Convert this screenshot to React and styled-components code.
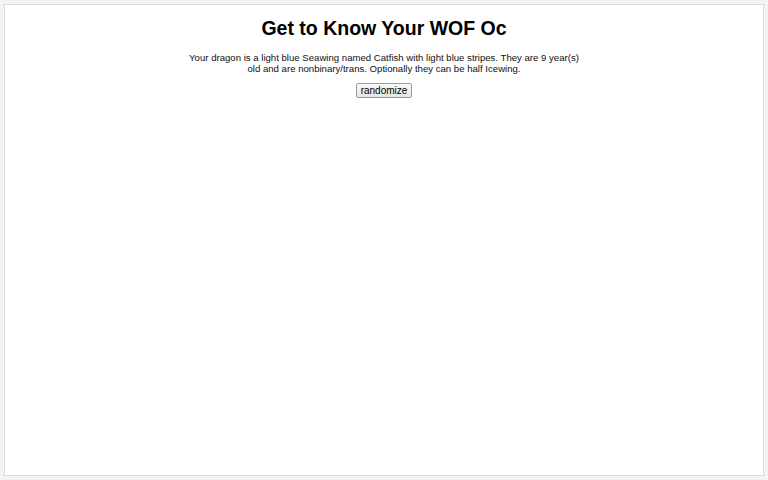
import React, { useState } from "react";
import styled, { createGlobalStyle } from "styled-components";

const GlobalStyle = createGlobalStyle`
  html, body {
    margin: 0;
    padding: 0;
    background: #f3f3f3;
  }
  body {
    font-family: "Liberation Sans", Arial, sans-serif;
    color: #000;
  }
`;

const Page = styled.div`
  box-sizing: border-box;
  height: 480px;
  padding: 4px;
`;

const Panel = styled.main`
  box-sizing: border-box;
  height: 472px;
  background: #fff;
  border: 1px solid #dcdcdc;
  display: flex;
  flex-direction: column;
  align-items: center;
`;

const Title = styled.h1`
  margin: 11px 0 0;
  font-size: 19.5px;
  line-height: 24px;
  font-weight: bold;
`;

const Blurb = styled.p`
  margin: 12px 0 0;
  max-width: 400px;
  font-size: 9.6px;
  line-height: 11.1px;
  text-align: center;
  color: #111;
`;

const RandomButton = styled.button`
  margin-top: 9px;
  font-family: "Liberation Sans", Arial, sans-serif;
  font-size: 10px;
  padding: 1px 4px;
  background: linear-gradient(#f8f8f8, #e6e6e6);
  border: 1px solid #9a9a9a;
  border-radius: 2px;
  color: #000;
`;

const describe = (d) =>
  `Your dragon is a ${d.color} ${d.tribe} named ${d.name} with ${d.stripes} stripes. ` +
  `They are ${d.age} year(s) old and are ${d.identity}. ` +
  `Optionally they can be half ${d.hybrid}.`;

export default function App() {
  const [dragon] = useState({
    color: "light blue",
    tribe: "Seawing",
    name: "Catfish",
    stripes: "light blue",
    age: 9,
    identity: "nonbinary/trans",
    hybrid: "Icewing",
  });
  return (
    <>
      <GlobalStyle />
      <Page>
        <Panel>
          <Title>Get to Know Your WOF Oc</Title>
          <Blurb>{describe(dragon)}</Blurb>
          <RandomButton type="button">randomize</RandomButton>
        </Panel>
      </Page>
    </>
  );
}
